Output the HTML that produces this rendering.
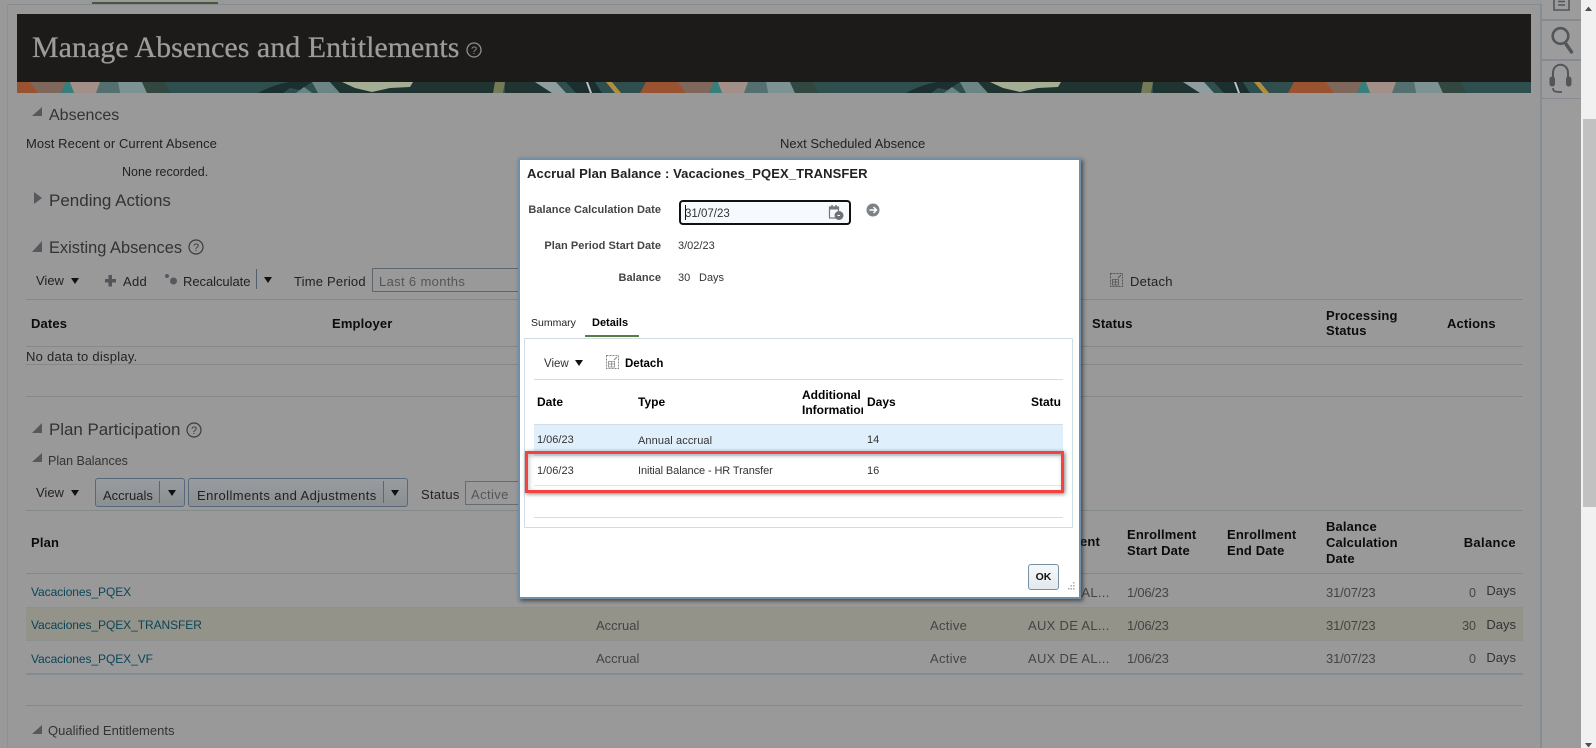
<!DOCTYPE html>
<html><head><meta charset="utf-8">
<style>
html,body{margin:0;padding:0;width:1596px;height:748px;overflow:hidden;background:#999}
body{position:relative;font-family:"Liberation Sans",sans-serif;font-size:13px;color:#222}
.t{position:absolute;white-space:nowrap;line-height:16px;height:16px;margin-top:1px}
.h{font-weight:bold;color:#0c0c0c;letter-spacing:.15px;margin-top:0}
.hh{margin-top:1px}
.s{font-size:17px;color:#333;line-height:22px;height:22px;margin-top:0}
.d{color:#444}
.l{color:#0b4458;font-size:12px;letter-spacing:-.07px}
.n{position:absolute;background:#84898c;height:1px}
.n2{position:absolute;background:#d3dde4;height:1px}
.b{position:absolute;box-sizing:border-box}
svg{position:absolute;display:block}
.g{color:#111;font-size:11px}
.gb{color:#000;font-size:11.5px;font-weight:bold}
.lb{font-weight:bold;color:#444;font-size:11px;letter-spacing:.05px;text-align:right;width:160px;left:501px}
</style></head><body>

<!-- frame -->
<div class="b" style="left:92px;top:2px;width:126px;height:2px;background:#46573a"></div>
<div class="n" style="left:7px;top:4px;width:1534px;background:#858d93"></div>
<div class="b" style="left:7px;top:4px;width:1px;height:744px;background:#8a9298"></div>
<div class="b" style="left:1540px;top:4px;width:2px;height:744px;background:#848c94"></div>
<div class="b" style="left:1542px;top:0;width:39px;height:748px;background:#9c9c9c"></div>
<div class="b" style="left:1542px;top:19px;width:39px;height:2px;background:#858b90"></div>
<div class="b" style="left:1542px;top:59px;width:39px;height:2px;background:#858b90"></div>
<div class="b" style="left:1542px;top:98px;width:39px;height:1px;background:#858b90"></div>
<!-- right icons -->
<svg style="left:1540px;top:0" width="41" height="100" viewBox="0 0 41 100" fill="none" stroke="#52565a">
<path d="M14 0V10H29V0" stroke-width="1.6"/><path d="M18 1.5H25M18 5H25" stroke-width="1.4"/>
<circle cx="20.500" cy="36" r="7.800" stroke-width="2.600"/><path d="M26 44L31.500 52" stroke-width="3.400" stroke-linecap="round"/>
<path d="M13 77V73C13 62 28 62 28 73V77" stroke-width="2"/>
<rect x="10" y="77" width="4.500" height="9" rx="2" fill="#52565a" stroke="#52565a"/>
<rect x="26.500" y="77" width="4.500" height="9" rx="2" fill="#52565a" stroke="#52565a"/>
<path d="M13 88C13 92 16 92 22 92" stroke-width="1.800"/>
</svg>
<!-- scrollbar -->
<div class="b" style="left:1581px;top:0;width:15px;height:748px;background:#f1f1f1"></div>
<div class="b" style="left:1583px;top:119px;width:13px;height:388px;background:#c1c1c1"></div>
<svg style="left:1581px;top:0" width="15" height="748"><path d="M4 11L7.500 6.500L11 11Z" fill="#505050"/><path d="M4 743L7.500 747.500L11 743Z" fill="#505050"/></svg>

<!-- header -->
<div class="b" style="left:17px;top:14px;width:1514px;height:68px;background:#1c1b19"></div>
<div class="t" style="left:32px;top:31px;height:32px;line-height:32px;font-family:'Liberation Serif',serif;font-size:30px;color:#9c9c9c;-webkit-text-stroke:.25px #9c9c9c">Manage Absences and Entitlements</div>
<svg style="left:466px;top:42px" width="16" height="16"><circle cx="8" cy="8" r="7" fill="none" stroke="#8e8e8e" stroke-width="1.300"/><text x="8" y="12" font-size="11" text-anchor="middle" fill="#8e8e8e" font-family="Liberation Sans">?</text></svg>
<svg style="left:17px;top:82px;overflow:hidden" width="1514" height="11" viewBox="17 0 1514 11">
<defs><g id="bn">
<rect x="-8" y="0" width="650" height="11" fill="#2f4f4e"/>
<path d="M-8 11L-2 0H34L41 11Z" fill="#9a5330"/>
<path d="M30 0H66L61 11H38Z" fill="#80675b"/>
<path d="M61 11L66 0H72L74 11Z" fill="#35807a"/>
<path d="M70 0H102L98 11H74Z" fill="#a28f88"/>
<path d="M100 0H118L120 11H96Z" fill="#546f70"/>
<path d="M118 0H142L147 11H120Z" fill="#7d9292"/>
<path d="M142 0H165L170 11H147Z" fill="#31473f"/>
<path d="M258 11Q275 2 290 0H312L300 8L290 6L283 11Z" fill="#1b2f2e"/>
<path d="M296 11L304 5L312 11Z" fill="#6b8585"/>
<path d="M312 0H330L340 11H318Z" fill="#6b8585"/>
<path d="M330 0H495V11H340Z" fill="#1f3431"/>
<path d="M342 0H413L410 5L390 6L372 10L355 6Z" fill="#a3ae94"/>
<path d="M495 0H505L503 11H493Z" fill="#747a55"/>
<path d="M505 0H540L560 11H505Z" fill="#1f3431"/>
<path d="M535 0H556L566 11H552Z" fill="#8f9d9f"/>
<path d="M566 0H595L602 11H576Z" fill="#1b2f2e"/>
<path d="M586 0H588L592 11H590Z" fill="#c5c5c5"/>
<path d="M606 0H612L621 11H615Z" fill="#b08d3f"/>
</g></defs>
<use href="#bn"/><use href="#bn" x="648"/><use href="#bn" x="1296"/>
</svg>

<!-- absences -->
<svg style="left:0;top:0" width="60" height="748" fill="#55595d">
<path d="M32 116L42 107V116Z"/><path d="M34 192L42 198L34 204Z"/><path d="M32 252L42 241V252Z"/><path d="M32 433L42 423V433Z"/><path d="M32 462L42 453V462Z"/><path d="M32 734L42 725V734Z"/>
</svg>
<div class="t s" style="left:49px;top:105px;font-size:16px">Absences</div>
<div class="t" style="left:26px;top:135px;letter-spacing:.08px">Most Recent or Current Absence</div>
<div class="t" style="left:780px;top:135px">Next Scheduled Absence</div>
<div class="t" style="left:122px;top:163px;font-size:12.500px">None recorded.</div>
<div class="t s" style="left:49px;top:190px">Pending Actions</div>
<div class="t s" style="left:49px;top:237px;font-size:16.400px">Existing Absences</div>
<svg style="left:188px;top:239px" width="16" height="16"><circle cx="8" cy="8" r="7" fill="none" stroke="#3c3c3c" stroke-width="1.200"/><text x="8" y="12" font-size="11" text-anchor="middle" fill="#3c3c3c" font-family="Liberation Sans">?</text></svg>

<!-- toolbar 1 -->
<div class="t" style="left:36px;top:272px">View</div>
<svg style="left:70px;top:278px" width="10" height="6"><path d="M1 0H9L5 6Z" fill="#111"/></svg>
<svg style="left:104px;top:274px" width="14" height="14"><path d="M4.500 1H8V5H12V8.500H8V12.500H4.500V8.500H1V5H4.500Z" fill="#52565a"/></svg>
<div class="t" style="left:123px;top:273px;letter-spacing:.3px">Add</div>
<svg style="left:164px;top:273px" width="16" height="14" fill="#55595d"><circle cx="3" cy="3" r="2"/><circle cx="9.500" cy="8" r="3.500"/></svg>
<div class="t" style="left:183px;top:273px;letter-spacing:-.05px">Recalculate</div>
<div class="b" style="left:256px;top:269px;width:1px;height:20px;background:#50606c"></div>
<svg style="left:263px;top:277px" width="10" height="6"><path d="M1 0H9L5 6Z" fill="#111"/></svg>
<div class="t" style="left:294px;top:273px;letter-spacing:.2px">Time Period</div>
<div class="b" style="left:372px;top:268px;width:150px;height:24px;border:1px solid #5f666c"></div>
<div class="t" style="left:379px;top:273px;color:#555;letter-spacing:.35px">Last 6 months</div>
<svg style="left:1110px;top:273px" width="14" height="15" fill="none" stroke="#555"><rect x=".5" y=".5" width="12" height="13" stroke-dasharray="2 1"/><path d="M2.500 6.500H8.500V12H2.500ZM2.500 9H8.500M5.500 6.500V12" stroke-width=".8"/><path d="M8 5L11 2" stroke-width="1"/></svg>
<div class="t" style="left:1130px;top:273px;letter-spacing:.25px">Detach</div>

<div class="n" style="left:26px;top:299px;width:1497px"></div>
<div class="t h hh" style="left:31px;top:315px">Dates</div>
<div class="t h hh" style="left:332px;top:315px">Employer</div>
<div class="t h hh" style="left:1092px;top:315px">Status</div>
<div class="t h" style="left:1326px;top:308px">Processing</div>
<div class="t h" style="left:1326px;top:323px">Status</div>
<div class="t h hh" style="left:1447px;top:315px">Actions</div>
<div class="n" style="left:26px;top:346px;width:1497px"></div>
<div class="t" style="left:26px;top:348px;letter-spacing:.25px">No data to display.</div>
<div class="n" style="left:26px;top:364px;width:1497px"></div>
<div class="n" style="left:26px;top:396px;width:1497px"></div>

<!-- plan participation -->
<div class="t s" style="left:49px;top:419px;font-size:16.900px">Plan Participation</div>
<svg style="left:186px;top:422px" width="16" height="16"><circle cx="8" cy="8" r="7" fill="none" stroke="#3c3c3c" stroke-width="1.200"/><text x="8" y="12" font-size="11" text-anchor="middle" fill="#3c3c3c" font-family="Liberation Sans">?</text></svg>
<div class="t" style="left:48px;top:452px;color:#333;font-size:12.500px">Plan Balances</div>
<div class="t" style="left:36px;top:484px">View</div>
<svg style="left:70px;top:490px" width="10" height="6"><path d="M1 0H9L5 6Z" fill="#111"/></svg>
<div class="b" style="left:95px;top:478px;width:90px;height:29px;border:1px solid #56687a;border-radius:3px;background:linear-gradient(#999c9f,#8a8f93)"></div>
<div class="b" style="left:159px;top:481px;width:1px;height:22px;background:#56687a"></div>
<svg style="left:167px;top:490px" width="10" height="6"><path d="M1 0H9L5 6Z" fill="#111"/></svg>
<div class="t" style="left:103px;top:487px">Accruals</div>
<div class="b" style="left:188px;top:478px;width:220px;height:29px;border:1px solid #56687a;border-radius:3px;background:linear-gradient(#999c9f,#8a8f93)"></div>
<div class="b" style="left:383px;top:481px;width:1px;height:22px;background:#56687a"></div>
<svg style="left:390px;top:490px" width="10" height="6"><path d="M1 0H9L5 6Z" fill="#111"/></svg>
<div class="t" style="left:197px;top:487px;letter-spacing:.42px">Enrollments and Adjustments</div>
<div class="t" style="left:421px;top:486px;letter-spacing:.3px">Status</div>
<div class="b" style="left:465px;top:481px;width:60px;height:24px;border:1px solid #666d72"></div>
<div class="t" style="left:471px;top:486px;color:#555;letter-spacing:.4px">Active</div>
<div class="n" style="left:26px;top:510px;width:1497px"></div>

<div class="t h" style="left:31px;top:535px">Plan</div>
<div class="t h" style="left:1070px;top:534px;width:30px;text-align:right">ent</div>
<div class="t h hh" style="left:1127px;top:526px">Enrollment</div>
<div class="t h hh" style="left:1127px;top:542px">Start Date</div>
<div class="t h hh" style="left:1227px;top:526px">Enrollment</div>
<div class="t h hh" style="left:1227px;top:542px">End Date</div>
<div class="t h hh" style="left:1326px;top:518px">Balance</div>
<div class="t h hh" style="left:1326px;top:534px">Calculation</div>
<div class="t h hh" style="left:1326px;top:550px">Date</div>
<div class="t h" style="left:1416px;top:535px;width:100px;text-align:right;letter-spacing:.35px">Balance</div>
<div class="n" style="left:26px;top:573px;width:1497px"></div>

<div class="b" style="left:26px;top:607px;width:1497px;height:34px;background:#93938a"></div>
<div class="n" style="left:26px;top:607px;width:1497px;background:#8d9090"></div>
<div class="n" style="left:26px;top:640px;width:1497px;background:#8d9090"></div>
<div class="b" style="left:26px;top:673px;width:1497px;height:2px;background:#848c92"></div>
<div class="n" style="left:26px;top:705px;width:1497px"></div>

<div class="t l" style="left:31px;top:583px">Vacaciones_PQEX</div>
<div class="t l" style="left:31px;top:616px">Vacaciones_PQEX_TRANSFER</div>
<div class="t l" style="left:31px;top:650px">Vacaciones_PQEX_VF</div>
<div class="t d" style="left:596px;top:617px">Accrual</div>
<div class="t d" style="left:596px;top:650px">Accrual</div>
<div class="t d" style="left:930px;top:617px;letter-spacing:.3px">Active</div>
<div class="t d" style="left:930px;top:650px;letter-spacing:.3px">Active</div>
<div class="t d" style="left:1028px;top:584px;letter-spacing:.3px">AUX DE AL...</div>
<div class="t d" style="left:1028px;top:617px;letter-spacing:.3px">AUX DE AL...</div>
<div class="t d" style="left:1028px;top:650px;letter-spacing:.3px">AUX DE AL...</div>
<div class="t d" style="left:1127px;top:584px;letter-spacing:-.25px">1/06/23</div>
<div class="t d" style="left:1127px;top:617px;letter-spacing:-.25px">1/06/23</div>
<div class="t d" style="left:1127px;top:650px;letter-spacing:-.25px">1/06/23</div>
<div class="t d" style="left:1326px;top:584px;letter-spacing:-.15px">31/07/23</div>
<div class="t d" style="left:1326px;top:617px;letter-spacing:-.15px">31/07/23</div>
<div class="t d" style="left:1326px;top:650px;letter-spacing:-.15px">31/07/23</div>
<div class="t d" style="left:1440px;top:584px;width:36px;text-align:right;font-size:12.500px">0</div>
<div class="t d" style="left:1440px;top:617px;width:36px;text-align:right;font-size:12.500px">30</div>
<div class="t d" style="left:1440px;top:650px;width:36px;text-align:right;font-size:12.500px">0</div>
<div class="t d" style="left:1476px;top:582px;width:40px;text-align:right;color:#333">Days</div>
<div class="t d" style="left:1476px;top:616px;width:40px;text-align:right;color:#333">Days</div>
<div class="t d" style="left:1476px;top:649px;width:40px;text-align:right;color:#333">Days</div>
<div class="t" style="left:48px;top:722px;color:#333">Qualified Entitlements</div>

<!-- dialog -->
<div class="b" style="left:518px;top:158px;width:563px;height:441px;background:#fff;border:2px solid #6f8ea9;box-shadow:2px 2px 4px rgba(40,40,40,.7)"></div>
<div class="t" style="left:527px;top:165px;font-weight:bold;font-size:13px;color:#222;letter-spacing:.1px">Accrual Plan Balance : Vacaciones_PQEX_TRANSFER</div>
<div class="t lb" style="top:201px">Balance Calculation Date</div>
<div class="t lb" style="top:237px">Plan Period Start Date</div>
<div class="t lb" style="top:269px">Balance</div>
<div class="b" style="left:679px;top:200px;width:172px;height:25px;border:2px solid #111;border-radius:4px;background:#f6f9fd"></div>
<div class="b" style="left:685px;top:205px;width:1px;height:15px;background:#111"></div>
<div class="t g" style="left:685px;top:205px;color:#333;font-size:11.500px">31/07/23</div>
<svg style="left:828px;top:204px" width="17" height="17" fill="none"><rect x="1.500" y="3" width="9" height="11" stroke="#777" stroke-width="1.200"/><path d="M4 1V4M8 1V4" stroke="#777" stroke-width="1.500"/><rect x="1.500" y="3" width="9" height="2.500" fill="#777"/><circle cx="11" cy="11.500" r="4.500" fill="#6c7378"/><path d="M9.500 11.500H12" stroke="#fff"/></svg>
<svg style="left:866px;top:203px" width="14" height="14"><circle cx="7" cy="7" r="6.500" fill="#7d8287"/><path d="M3.500 7H10M7.500 4L10.500 7L7.500 10" fill="none" stroke="#fff" stroke-width="1.500"/></svg>
<div class="t g" style="left:678px;top:237px;color:#333;font-size:11px">3/02/23</div>
<div class="t g" style="left:678px;top:269px;color:#333;font-size:11px">30</div>
<div class="t g" style="left:699px;top:269px;color:#333;font-size:11px">Days</div>

<div class="t g" style="left:531px;top:314px;color:#222;font-size:10.500px">Summary</div>
<div class="t gb" style="left:592px;top:314px;font-size:11px">Details</div>
<div class="b" style="left:585px;top:335px;width:54px;height:2px;background:#5b7a48"></div>
<div class="b" style="left:524px;top:338px;width:549px;height:190px;border:1px solid #d0dce4;border-radius:1px"></div>

<div class="t g" style="left:544px;top:355px;color:#333;font-size:11.500px">View</div>
<svg style="left:574px;top:360px" width="10" height="6"><path d="M1 0H9L5 6Z" fill="#111"/></svg>
<svg style="left:606px;top:355px" width="14" height="15" fill="none" stroke="#888"><rect x=".5" y=".5" width="12" height="13" stroke-dasharray="2 1"/><path d="M2.500 6.500H8.500V12H2.500ZM2.500 9H8.500M5.500 6.500V12" stroke-width=".8"/><path d="M8 5L11 2" stroke-width="1"/></svg>
<div class="t gb" style="left:625px;top:355px">Detach</div>
<div class="n2" style="left:534px;top:379px;width:529px"></div>

<div class="t gb" style="left:537px;top:393px;font-size:12px">Date</div>
<div class="t gb" style="left:638px;top:393px;font-size:12px">Type</div>
<div class="t gb" style="left:802px;top:386px;font-size:12px;width:61px;overflow:hidden">Additional</div>
<div class="t gb" style="left:802px;top:401px;font-size:12px;width:61px;overflow:hidden">Information</div>
<div class="t gb" style="left:867px;top:393px;font-size:12px">Days</div>
<div class="t gb" style="left:1031px;top:393px;font-size:12px;width:32px;overflow:hidden">Statu</div>
<div class="n2" style="left:534px;top:424px;width:529px"></div>
<div class="b" style="left:534px;top:425px;width:529px;height:31px;background:#e0effc"></div>
<div class="t g" style="left:537px;top:431px;color:#333">1/06/23</div>
<div class="t g" style="left:638px;top:432px;color:#333;letter-spacing:.1px">Annual accrual</div>
<div class="t g" style="left:867px;top:431px;color:#333">14</div>
<div class="t g" style="left:537px;top:462px;color:#333">1/06/23</div>
<div class="t g" style="left:638px;top:462px;color:#333;letter-spacing:-.1px">Initial Balance - HR Transfer</div>
<div class="t g" style="left:867px;top:462px;color:#333">16</div>
<div class="b" style="left:534px;top:485px;width:529px;height:1px;background:#e2e6e9"></div>
<div class="n2" style="left:534px;top:517px;width:529px"></div>

<div class="b" style="left:525px;top:451px;width:539px;height:42px;border:3px solid #f4423f;box-shadow:1px 1px 4px rgba(0,0,0,.5),inset 1px 2px 4px rgba(0,0,0,.25)"></div>

<div class="b" style="left:1028px;top:564px;width:31px;height:26px;border:1px solid #7a8f9f;border-radius:3px;background:linear-gradient(#f7f9fb,#e2e8ed)"></div>
<div class="t" style="left:1028px;top:568px;width:31px;text-align:center;font-weight:bold;font-size:10.500px;color:#111">OK</div>
<svg style="left:1066px;top:582px" width="10" height="10" fill="#aaa"><rect x="7" y="0" width="1.500" height="1.500"/><rect x="4.500" y="3" width="1.500" height="1.500"/><rect x="7" y="3" width="1.500" height="1.500"/><rect x="2" y="6" width="1.500" height="1.500"/><rect x="4.500" y="6" width="1.500" height="1.500"/><rect x="7" y="6" width="1.500" height="1.500"/></svg>
</body></html>
